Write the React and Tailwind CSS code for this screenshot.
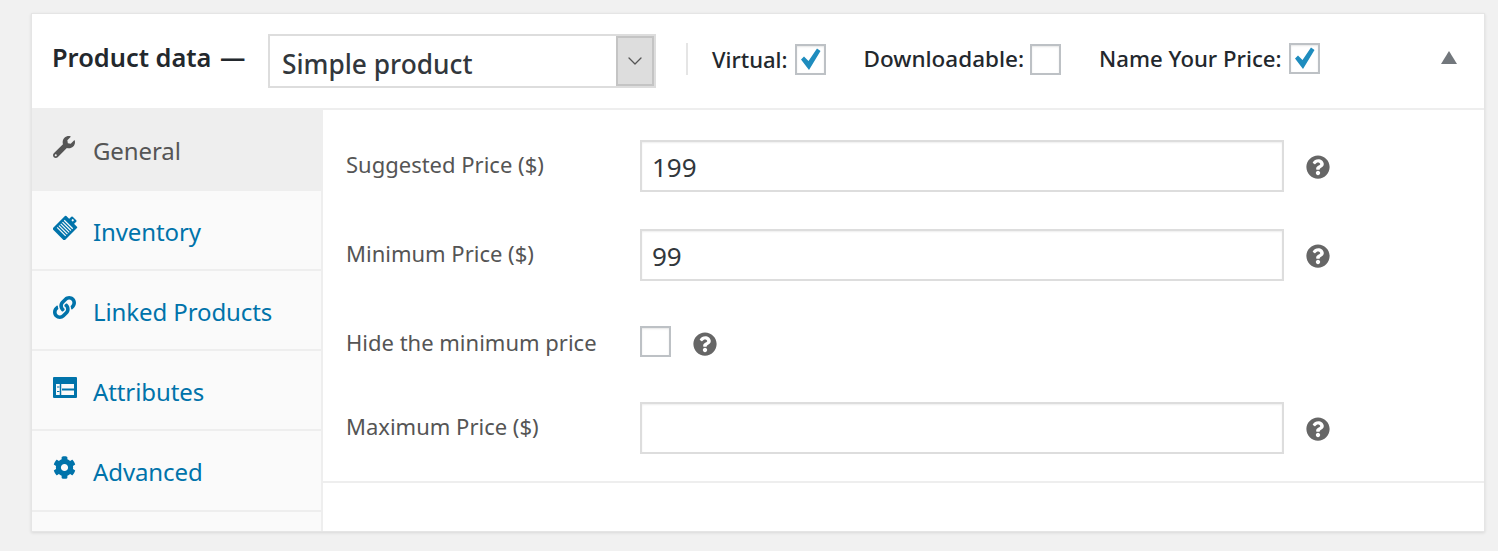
import { ChevronDown } from "lucide-react";
import { FaWrench, FaLink, FaCog, FaQuestionCircle } from "react-icons/fa";

const tabs = [
    { name: "General", icon: "wrench", active: true, h: "h-[81px]" },
    { name: "Inventory", icon: "inventory", h: "h-[80px]" },
    { name: "Linked Products", icon: "link", h: "h-[80px]" },
    { name: "Attributes", icon: "attributes", h: "h-[80px]" },
    { name: "Advanced", icon: "gear", h: "h-[81px]" },
];

function InventoryIcon() {
    return (
        <svg width="26" height="26" viewBox="0 0 26 26">
            <g transform="rotate(45 13 13)">
                <rect x="4.500" y="5" width="17" height="19" rx="1" fill="#0073aa" />
                <rect x="9.500" y="1" width="7" height="6" rx="1" fill="#0073aa" />
                <circle cx="13" cy="3.500" r="1.100" fill="#fafafa" />
                <path d="M7 9.500h12M7 12h12M7 14.500h12M7 17h12M7 19.500h12" stroke="#fafafa" strokeWidth="1.200" />
            </g>
        </svg>
    );
}

function AttributesIcon() {
    return (
        <svg width="24" height="21" viewBox="0 0 24 21">
            <rect width="24" height="21" rx="1" fill="#0073aa" />
            <rect x="3" y="7" width="18" height="11" fill="#fafafa" />
            <path d="M7.500 7v11" stroke="#0073aa" strokeWidth="1.500" />
            <path d="M9 12.500h12" stroke="#0073aa" strokeWidth="2" />
            <path d="M4 10h2.500M4 14.500h2.500" stroke="#0073aa" strokeWidth="1.200" />
        </svg>
    );
}

function TabIcon({ icon }) {
    if (icon === "wrench") return <FaWrench className="w-[22px] h-[22px] text-[#555]" />;
    if (icon === "inventory") return <InventoryIcon />;
    if (icon === "link") return <FaLink className="w-[23px] h-[23px] text-[#0073aa]" />;
    if (icon === "attributes") return <AttributesIcon />;
    return <FaCog className="w-[23px] h-[23px] text-[#0073aa]" />;
}

function Check({ checked }) {
    return (
        <span className="w-[31px] h-[31px] border-2 border-[#bdc1c5] bg-white shadow-[inset_0_1px_2px_rgba(0,0,0,0.1)] flex items-center justify-center">
            {checked && (
                <svg width="25" height="25" viewBox="0 0 25 25">
                    <path d="M3 12.500l3-3 4.500 4.500L19 1.500l3.500 2.500L11 23z" fill="#1e8cbe" />
                </svg>
            )}
        </span>
    );
}

function Help({ className }) {
    return <FaQuestionCircle className={`w-[24px] h-[24px] text-[#666] ${className}`} />;
}

function PriceRow({ label, value, className }) {
    return (
        <div className={`flex items-center ${className}`}>
            <label className="w-[294px] text-[22px] text-[#555] -mt-1">{label}</label>
            <div className="w-[644px] h-[52px] border-2 border-[#ddd] shadow-[inset_0_1px_2px_rgba(0,0,0,0.07)] px-[10px] text-[26px] leading-[50px] text-[#32373c]">
                {value}
            </div>
            <Help className="ml-[22px] mt-[2px]" />
        </div>
    );
}

export default function App() {
    return (
        <div className="w-[1498px] h-[551px] bg-[#f1f1f1] pt-[13px] pl-[31px] font-['Noto_Sans','Open_Sans',sans-serif] overflow-hidden">
            <div className="w-[1454px] h-[519px] bg-white border border-[#e5e5e5] shadow-[0_1px_3px_rgba(0,0,0,0.1)] flex flex-col">
                <div className="h-[96px] border-b-2 border-[#eee] flex items-center pl-[20px] shrink-0">
                    <h2 className="text-[25.4px] font-semibold text-[#23282d] w-[216px] -mt-[8px] whitespace-nowrap">Product data <span className="ml-[2px]">—</span></h2>
                    <div className="w-[388px] h-[54px] border-2 border-[#ddd] flex items-center -mt-[1px]">
                        <span className="flex-1 pl-[12px] text-[26.3px] font-medium text-[#32373c] mt-[8px]">Simple product</span>
                        <span className="w-[38px] h-[50px] border-2 border-[#c4c4c4] bg-[#ddd] flex items-center justify-center">
                            <ChevronDown strokeWidth={1.300} className="w-[24px] h-[24px] text-[#555]" />
                        </span>
                    </div>
                    <span className="w-[2px] h-[32px] bg-[#e5e5e5] ml-[30px] mr-[24px] -mt-[4px]" />
                    <div className="flex items-center gap-[7px] -mt-[4px]">
                        <span className="text-[22px] font-medium text-[#23282d]">Virtual:</span>
                        <Check checked />
                    </div>
                    <div className="flex items-center gap-[6px] ml-[38px] -mt-[4px]">
                        <span className="text-[22.5px] font-medium text-[#23282d]">Downloadable:</span>
                        <Check />
                    </div>
                    <div className="flex items-center gap-[7px] ml-[38px] -mt-[4px]">
                        <span className="text-[22.2px] font-medium text-[#23282d]">Name Your Price:</span>
                        <Check checked />
                    </div>
                    <span className="ml-auto mr-[27px] -mt-[8px] w-0 h-0 border-x-[8px] border-x-transparent border-b-[13px] border-b-[#72777c]" />
                </div>
                <div className="flex flex-1 min-h-0">
                    <ul className="w-[289px] bg-[#fafafa] border-r-2 border-[#eee] shrink-0 box-content">
                        {tabs.map((tab) => (
                            <li
                                key={tab.name}
                                className={`${tab.h} flex items-center pl-[21px] border-b-2 ${tab.active ? "bg-[#eee] border-[#eee] text-[#555]" : "border-[#eee] text-[#0073aa]"}`}
                            >
                                <span className="w-[40px] -mt-[6px] flex"><TabIcon icon={tab.icon} /></span>
                                <span className="text-[24px] tracking-[-0.1px] mt-[3px]">{tab.name}</span>
                            </li>
                        ))}
                    </ul>
                    <div className="flex-1">
                        <div className="h-[373px] border-b-2 border-[#eee] pl-[23px] pt-[30px]">
                            <PriceRow label="Suggested Price ($)" value="199" />
                            <PriceRow label="Minimum Price ($)" value="99" className="mt-[37px]" />
                            <div className="flex items-center h-[31px] mt-[45px]">
                                <label className="w-[294px] text-[22px] text-[#555] mt-[2px]">Hide the minimum price</label>
                                <Check />
                                <Help className="ml-[22px] mt-[5px]" />
                            </div>
                            <PriceRow label="Maximum Price ($)" value="" className="mt-[45px]" />
                        </div>
                    </div>
                </div>
            </div>
        </div>
    );
}
